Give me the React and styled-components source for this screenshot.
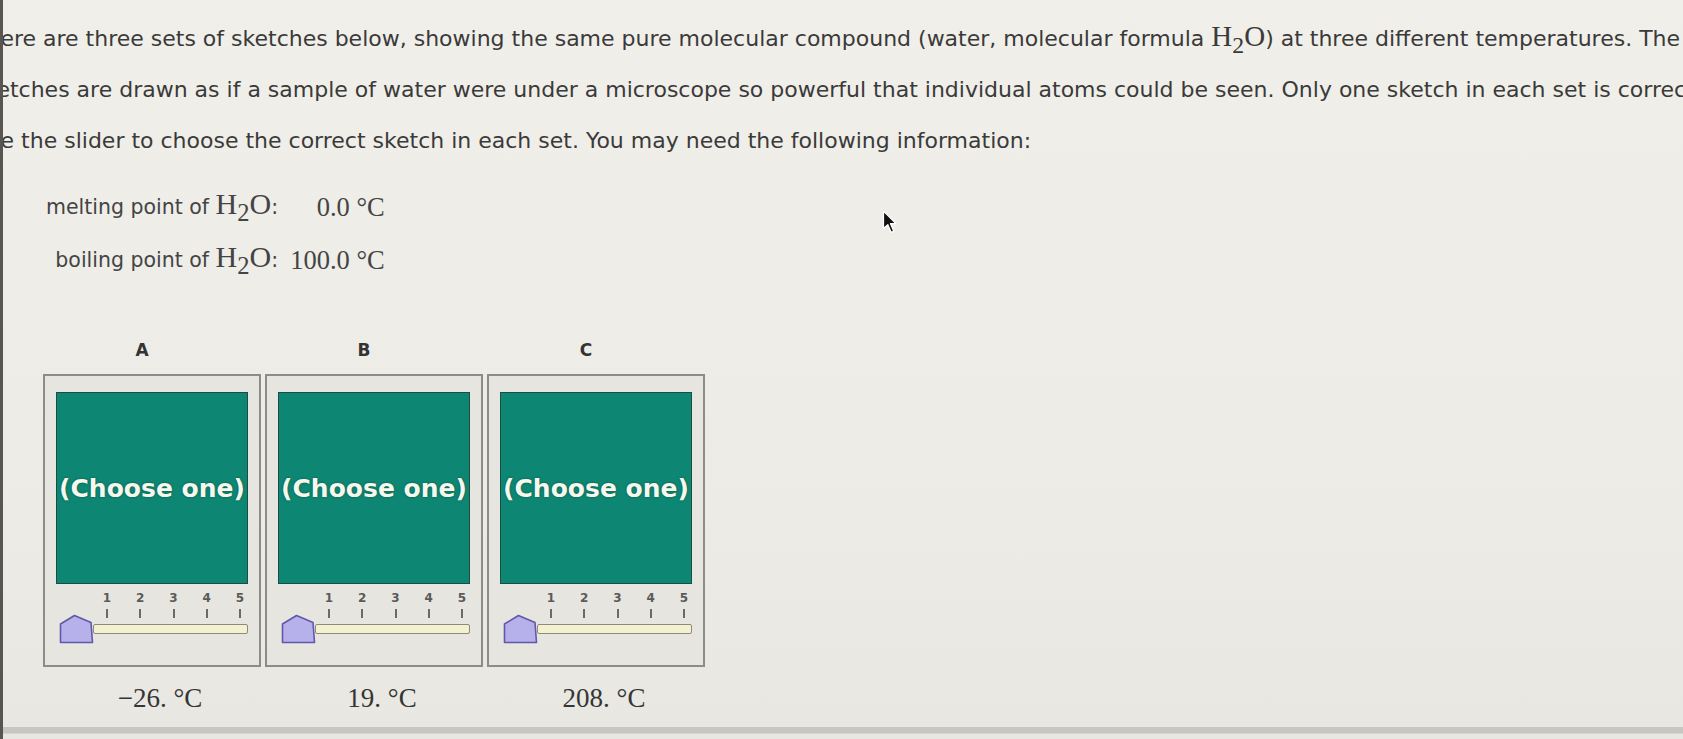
import React from 'react';
import styled, { createGlobalStyle } from 'styled-components';

const GlobalStyle = createGlobalStyle`
  html,
  body {
    margin: 0;
    padding: 0;
  }
  body {
    background: #ecebe6;
    font-family: 'DejaVu Sans', Verdana, sans-serif;
    color: #3b3a3a;
    overflow: hidden;
  }
`;

const Page = styled.div`
  position: relative;
  height: 739px;
  box-sizing: border-box;
  overflow: hidden;
  border-left: 3px solid #57564f;
  background: linear-gradient(180deg, #f0efea 0%, #ecebe5 70%, #e8e7e1 100%);
`;

const Intro = styled.div`
  padding-top: 13px;
  margin-left: -30px;
  font-size: 22px;
  line-height: 51px;
  white-space: nowrap;
`;

const Formula = styled.span`
  font-family: 'Liberation Serif', 'Times New Roman', serif;
  font-size: ${p => p.$size || 29}px;
  line-height: 1;

  sub {
    font-size: 0.82em;
    line-height: 0;
    vertical-align: -0.3em;
  }
`;

const Info = styled.div`
  display: grid;
  grid-template-columns: auto auto;
  justify-content: start;
  column-gap: 12px;
  margin: 15px 0 0 43px;
  font-size: 20.5px;
  line-height: 53px;
  color: #444;
`;

const Label = styled.div`
  text-align: right;
`;

const Value = styled.div`
  text-align: right;
  font-family: 'Liberation Serif', 'Times New Roman', serif;
  font-size: 26.5px;
  line-height: 53px;
`;

const Sets = styled.div`
  display: grid;
  grid-template-columns: repeat(3, 218px);
  column-gap: 4px;
  margin-left: 40px;
`;

const Heading = styled.div`
  height: 87px;
  box-sizing: border-box;
  display: flex;
  align-items: flex-end;
  justify-content: center;
  padding: 0 20px 14px 0;
  font-size: 17px;
  font-weight: bold;
  line-height: 20px;
  color: #333;
`;

const Panel = styled.div`
  height: 293px;
  box-sizing: border-box;
  border: 2px solid #8d8c86;
  background: #e6e5df;
  padding: 16px 0 0 11px;
`;

const Sketch = styled.div`
  width: 192px;
  height: 192px;
  box-sizing: border-box;
  background: #0d8673;
  border: 1px solid #1b4d45;
  display: flex;
  align-items: center;
  justify-content: center;
`;

const Choose = styled.span`
  font-family: 'DejaVu Sans', Verdana, sans-serif;
  font-weight: bold;
  font-size: 25px;
  color: #f6f8ee;
  white-space: nowrap;
  text-shadow: 0 0 2px rgba(0, 40, 30, 0.6);
`;

const Slider = styled.div`
  position: relative;
  height: 81px;
  padding-top: 7px;
  box-sizing: border-box;
`;

const Ticks = styled.div`
  display: flex;
  justify-content: space-between;
  width: 145px;
  margin-left: 45px;
`;

const Tick = styled.div`
  width: 12px;
  display: flex;
  flex-direction: column;
  align-items: center;
  font-size: 12px;
  font-weight: bold;
  line-height: 14px;
  color: #5a5a58;

  &::after {
    content: '';
    width: 2px;
    height: 9px;
    margin-top: 4px;
    background: #6a6a66;
  }
`;

const Track = styled.div`
  width: 155px;
  height: 10px;
  box-sizing: border-box;
  margin: 6px 0 0 37px;
  background: #f3f1cf;
  border: 1px solid #8e8a7d;
  border-radius: 2px;
`;

const Knob = styled.svg`
  position: absolute;
  left: 3px;
  top: 30px;
`;

const Temp = styled.div`
  padding: 16px 0 0 16px;
  text-align: center;
  font-family: 'Liberation Serif', 'Times New Roman', serif;
  font-size: 27px;
  line-height: 30px;
  color: #353535;
`;

const Rule = styled.div`
  margin-top: 14px;
  height: 6px;
  background: #c7c6c0;
  box-shadow: 0 1px 0 #d6d5cf;
`;

const Pointer = styled.svg`
  position: absolute;
  left: 879px;
  top: 210px;
`;

const H2O = ({ size }) => (
  <Formula $size={size}>
    H<sub>2</sub>O
  </Formula>
);

const sets = [
  { name: 'A', temp: '\u221226. \u00b0C' },
  { name: 'B', temp: '19. \u00b0C' },
  { name: 'C', temp: '208. \u00b0C' },
];

const SketchPanel = () => (
  <Panel>
    <Sketch>
      <Choose>(Choose one)</Choose>
    </Sketch>
    <Slider>
      <Ticks>
        {[1, 2, 3, 4, 5].map(n => (
          <Tick key={n}>{n}</Tick>
        ))}
      </Ticks>
      <Track />
      <Knob width="35" height="30" viewBox="0 0 35 30">
        <path
          d="M1.5 28.5 V10 L15.5 1.5 L32 8.5 L33.5 28.5 Z"
          fill="#b6b1ea"
          stroke="#6059aa"
          strokeWidth="1.6"
          strokeLinejoin="round"
        />
      </Knob>
    </Slider>
  </Panel>
);

const App = () => (
  <>
    <GlobalStyle />
    <Page>
      <Intro>
        <div>
          There are three sets of sketches below, showing the same pure molecular compound (water,
          molecular formula <H2O />) at three different temperatures. The
        </div>
        <div>
          sketches are drawn as if a sample of water were under a microscope so powerful that
          individual atoms could be seen. Only one sketch in each set is correct.
        </div>
        <div>
          Use the slider to choose the correct sketch in each set. You may need the following
          information:
        </div>
      </Intro>

      <Info>
        <Label>
          melting point of <H2O size={30} />:
        </Label>
        <Value>0.0 °C</Value>
        <Label>
          boiling point of <H2O size={30} />:
        </Label>
        <Value>100.0 °C</Value>
      </Info>

      <Sets>
        {sets.map(s => (
          <Heading key={s.name}>{s.name}</Heading>
        ))}
        {sets.map(s => (
          <SketchPanel key={s.name} />
        ))}
        {sets.map(s => (
          <Temp key={s.name}>{s.temp}</Temp>
        ))}
      </Sets>

      <Rule />

      <Pointer width="16" height="24" viewBox="0 0 14 22">
        <path
          d="M1 1 L1 17 L5 13.5 L8 20.5 L10.5 19.5 L7.5 12.5 L12.5 12.5 Z"
          fill="#111"
          stroke="#fff"
          strokeWidth="1.2"
          strokeLinejoin="round"
        />
      </Pointer>
    </Page>
  </>
);

export default App;
